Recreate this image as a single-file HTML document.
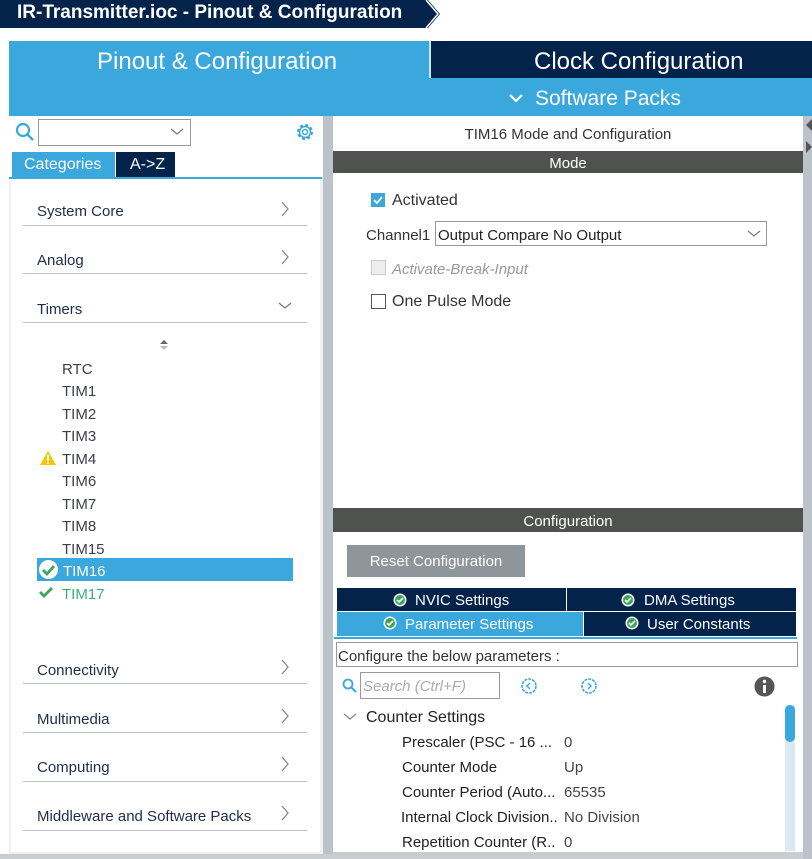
<!DOCTYPE html>
<html><head><meta charset="utf-8"><style>
*{margin:0;padding:0;box-sizing:border-box}
body{width:812px;height:859px;overflow:hidden;background:#fff;font-family:"Liberation Sans",Arial,sans-serif;position:relative;color:#333}
.a{position:absolute}
.t{position:absolute;white-space:nowrap}
.cat{position:absolute;left:23px;width:284px;height:1px;background:#b8c2cc}
.ct{position:absolute;left:37px;font-size:15px;color:#1f2d4a}
.ar{position:absolute;left:280px}
.li{position:absolute;left:62px;font-size:15px;color:#3a3f4a}
.pr{position:absolute;font-size:15px;color:#222}
</style></head><body>
<div class="a" style="left:0;top:0;width:428px;height:28px;background:#03234b"></div>
<svg class="a" style="left:418px;top:0" width="24" height="28"><path d="M0 0 L10 0 L22 14 L10 28 L0 28Z" fill="#03234b"/><path d="M8 0 L20 14 L8 28" stroke="#fff" stroke-width="1.5" fill="none"/></svg>
<div class="t" style="left:17px;top:2px;font-size:19px;font-weight:bold;color:#fff">IR-Transmitter.ioc - Pinout &amp; Configuration</div>
<div class="a" style="left:9px;top:41px;width:420px;height:37px;background:#3aa8dc"></div>
<div class="a" style="left:429px;top:41px;width:2px;height:37px;background:#cfe6f2"></div>
<div class="a" style="left:431px;top:41px;width:381px;height:37px;background:#03234b"></div>
<div class="t" style="left:97px;top:48px;font-size:24px;color:#fff">Pinout &amp; Configuration</div>
<div class="t" style="left:534px;top:48px;font-size:24px;color:#fff">Clock Configuration</div>
<div class="a" style="left:9px;top:78px;width:803px;height:38px;background:#3aa8dc"></div>
<svg class="a" style="left:509px;top:93px" width="14" height="10"><path d="M1 2 L7 8 L13 2" stroke="#fff" stroke-width="2.2" fill="none"/></svg>
<div class="t" style="left:535px;top:87px;font-size:21px;color:#fff">Software Packs</div>
<div class="a" style="left:9px;top:116px;width:314px;height:738px;background:#f0f0f0"></div>
<div class="a" style="left:11px;top:180px;width:309px;height:672px;background:#fff"></div>
<div class="a" style="left:9px;top:116px;width:314px;height:64px;background:#fff"></div>
<div class="a" style="left:323px;top:116px;width:10px;height:740px;background:#b9c3c9"></div>
<div class="a" style="left:0;top:854px;width:333px;height:5px;background:#c8cdd1"></div>
<svg class="a" style="left:15px;top:121px" width="22" height="22"><circle cx="8" cy="9" r="6" stroke="#3aa8dc" stroke-width="2.2" fill="none"/><path d="M12 13 L18 19" stroke="#3aa8dc" stroke-width="2.4"/></svg>
<div class="a" style="left:38px;top:119px;width:153px;height:27px;border:1px solid #999;background:#fff"></div>
<svg class="a" style="left:170px;top:128px" width="14" height="8"><path d="M1 1 L7 6 L13 1" stroke="#777" stroke-width="1.2" fill="none"/></svg>
<svg class="a" style="left:294px;top:121px" width="22" height="22"><circle cx="11" cy="11" r="7" stroke="#3aa8dc" stroke-width="2" fill="none" stroke-dasharray="3 2.5"/><circle cx="11" cy="11" r="5.5" stroke="#3aa8dc" stroke-width="1.5" fill="none"/><circle cx="11" cy="11" r="2.5" stroke="#3aa8dc" stroke-width="1.5" fill="none"/></svg>
<div class="a" style="left:12px;top:152px;width:103px;height:25px;background:#3aa8dc"></div>
<div class="t" style="left:24px;top:156px;font-size:16px;color:#fff">Categories</div>
<div class="a" style="left:116px;top:152px;width:59px;height:25px;background:#03234b"></div>
<div class="t" style="left:130px;top:156px;font-size:16px;color:#fff">A-&gt;Z</div>
<div class="a" style="left:9px;top:177px;width:313px;height:2px;background:#3aa8dc"></div>

<div class="ct" style="top:203px">System Core</div><svg class="ar" style="top:201px" width="10" height="16"><path d="M2 1 L8 8 L2 15" stroke="#888" stroke-width="1.3" fill="none"/></svg><div class="cat" style="top:225px"></div>
<div class="ct" style="top:252px">Analog</div><svg class="ar" style="top:249px" width="10" height="16"><path d="M2 1 L8 8 L2 15" stroke="#888" stroke-width="1.3" fill="none"/></svg><div class="cat" style="top:273px"></div>
<div class="ct" style="top:301px">Timers</div><svg class="a" style="left:278px;top:302px" width="14" height="8"><path d="M1 1 L7 6 L13 1" stroke="#777" stroke-width="1.2" fill="none"/></svg><div class="cat" style="top:322px"></div>
<svg class="a" style="left:159px;top:339px" width="10" height="12"><path d="M1 5 L5 1 L9 5Z" fill="#666"/><path d="M1 7 L5 11 L9 7Z" fill="#bbb"/></svg>
<div class="li" style="top:361px">RTC</div>
<div class="li" style="top:383px">TIM1</div>
<div class="li" style="top:406px">TIM2</div>
<div class="li" style="top:428px">TIM3</div>
<svg class="a" style="left:39px;top:450px" width="18" height="16"><path d="M9 1 L17 15 L1 15Z" fill="#f7c600"/><path d="M9 5 L9 11" stroke="#fff" stroke-width="2"/><circle cx="9" cy="13" r="1" fill="#fff"/></svg>
<div class="li" style="top:451px">TIM4</div>
<div class="li" style="top:473px">TIM6</div>
<div class="li" style="top:496px">TIM7</div>
<div class="li" style="top:518px">TIM8</div>
<div class="li" style="top:541px">TIM15</div>
<div class="a" style="left:37px;top:558px;width:256px;height:23px;background:#3aa8dc"></div>
<svg class="a" style="left:38px;top:559px" width="21" height="21"><circle cx="10.5" cy="10.5" r="9.5" fill="#fff"/><path d="M5 11 L9 15 L16 7" stroke="#3aa45c" stroke-width="2.8" fill="none"/></svg>
<div class="li" style="top:563px;left:63px;color:#fff">TIM16</div>
<svg class="a" style="left:38px;top:585px" width="16" height="14"><path d="M2 7 L6 11 L14 3" stroke="#3aa45c" stroke-width="2.8" fill="none"/></svg>
<div class="li" style="top:586px;color:#3bb07a">TIM17</div>

<div class="ct" style="top:662px">Connectivity</div><svg class="ar" style="top:659px" width="10" height="16"><path d="M2 1 L8 8 L2 15" stroke="#888" stroke-width="1.3" fill="none"/></svg><div class="cat" style="top:683px"></div>
<div class="ct" style="top:711px">Multimedia</div><svg class="ar" style="top:708px" width="10" height="16"><path d="M2 1 L8 8 L2 15" stroke="#888" stroke-width="1.3" fill="none"/></svg><div class="cat" style="top:732px"></div>
<div class="ct" style="top:759px">Computing</div><svg class="ar" style="top:756px" width="10" height="16"><path d="M2 1 L8 8 L2 15" stroke="#888" stroke-width="1.3" fill="none"/></svg><div class="cat" style="top:781px"></div>
<div class="ct" style="top:808px">Middleware and Software Packs</div><svg class="ar" style="top:805px" width="10" height="16"><path d="M2 1 L8 8 L2 15" stroke="#888" stroke-width="1.3" fill="none"/></svg><div class="cat" style="top:830px"></div>

<div class="a" style="left:803px;top:116px;width:9px;height:743px;background:#b9c3c9"></div>
<svg class="a" style="left:803px;top:118px" width="9" height="36"><path d="M9 1 L3 7 L9 13Z" fill="#555"/><path d="M3 23 L9 29 L3 35Z" fill="#555"/></svg>
<div class="t" style="left:333px;width:470px;text-align:center;top:126px;font-size:15px;color:#333">TIM16 Mode and Configuration</div>
<div class="a" style="left:333px;top:151px;width:470px;height:22px;background:#505250"></div>
<div class="t" style="left:333px;width:470px;text-align:center;top:155px;font-size:15px;color:#fff">Mode</div>
<div class="a" style="left:371px;top:193px;width:14px;height:14px;background:#3aa8dc"></div>
<svg class="a" style="left:371px;top:193px" width="14" height="14"><path d="M3 7 L6 10 L11 4" stroke="#fff" stroke-width="1.8" fill="none"/></svg>
<div class="t" style="left:392px;top:192px;font-size:16px;color:#333">Activated</div>
<div class="t" style="left:366px;top:227px;font-size:15px;color:#333">Channel1</div>
<div class="a" style="left:435px;top:221px;width:332px;height:25px;border:1px solid #999"></div>
<div class="t" style="left:438px;top:227px;font-size:15px;color:#222">Output Compare No Output</div>
<svg class="a" style="left:747px;top:230px" width="14" height="8"><path d="M1 1 L7 6 L13 1" stroke="#777" stroke-width="1.2" fill="none"/></svg>
<div class="a" style="left:371px;top:260px;width:15px;height:15px;border:1px solid #ccc;background:#eee"></div>
<div class="t" style="left:392px;top:261px;font-size:15px;font-style:italic;color:#999">Activate-Break-Input</div>
<div class="a" style="left:371px;top:294px;width:15px;height:15px;border:1px solid #555"></div>
<div class="t" style="left:392px;top:293px;font-size:16px;color:#333">One Pulse Mode</div>

<div class="a" style="left:333px;top:508px;width:470px;height:24px;background:#505250"></div>
<div class="t" style="left:333px;width:470px;text-align:center;top:513px;font-size:15px;color:#fff">Configuration</div>
<div class="a" style="left:347px;top:545px;width:178px;height:32px;background:#8e959b"></div>
<div class="t" style="left:347px;width:178px;text-align:center;top:553px;font-size:15px;color:#fff">Reset Configuration</div>
<div class="a" style="left:337px;top:588px;width:229px;height:23px;background:#03234b"></div>
<div class="a" style="left:567px;top:588px;width:229px;height:23px;background:#03234b"></div>
<div class="a" style="left:337px;top:612px;width:246px;height:24px;background:#3aa8dc"></div>
<div class="a" style="left:584px;top:612px;width:212px;height:24px;background:#03234b"></div>
<div class="a" style="left:334px;top:637px;width:463px;height:2px;background:#3aa8dc"></div>
<svg class="a" style="left:393px;top:593px" width="14" height="14"><circle cx="7" cy="7" r="6.5" fill="#fff"/><circle cx="7" cy="7" r="5" fill="#3aa45c"/><path d="M4 7 L6 9 L10 5" stroke="#fff" stroke-width="1.6" fill="none"/></svg>
<div class="t" style="left:415px;top:592px;font-size:15px;color:#fff">NVIC Settings</div>
<svg class="a" style="left:621px;top:593px" width="14" height="14"><circle cx="7" cy="7" r="6.5" fill="#fff"/><circle cx="7" cy="7" r="5" fill="#3aa45c"/><path d="M4 7 L6 9 L10 5" stroke="#fff" stroke-width="1.6" fill="none"/></svg>
<div class="t" style="left:644px;top:592px;font-size:15px;color:#fff">DMA Settings</div>
<svg class="a" style="left:383px;top:616px" width="14" height="14"><circle cx="7" cy="7" r="6.5" fill="#fff"/><circle cx="7" cy="7" r="5" fill="#3aa45c"/><path d="M4 7 L6 9 L10 5" stroke="#fff" stroke-width="1.6" fill="none"/></svg>
<div class="t" style="left:405px;top:616px;font-size:15px;color:#fff">Parameter Settings</div>
<svg class="a" style="left:625px;top:616px" width="14" height="14"><circle cx="7" cy="7" r="6.5" fill="#fff"/><circle cx="7" cy="7" r="5" fill="#3aa45c"/><path d="M4 7 L6 9 L10 5" stroke="#fff" stroke-width="1.6" fill="none"/></svg>
<div class="t" style="left:647px;top:616px;font-size:15px;color:#fff">User Constants</div>
<div class="a" style="left:336px;top:642px;width:462px;height:25px;border:1px solid #999"></div>
<div class="t" style="left:338px;top:648px;font-size:15px;color:#333">Configure the below parameters :</div>
<svg class="a" style="left:342px;top:678px" width="16" height="16"><circle cx="6" cy="6" r="4.5" stroke="#3aa8dc" stroke-width="1.8" fill="none"/><path d="M9 9 L14 14" stroke="#3aa8dc" stroke-width="2"/></svg>
<div class="a" style="left:360px;top:672px;width:140px;height:27px;border:1px solid #999"></div>
<div class="t" style="left:363px;top:678px;font-size:15px;font-style:italic;color:#aaa">Search (Ctrl+F)</div>
<svg class="a" style="left:520px;top:677px" width="18" height="18"><circle cx="9" cy="9" r="7" stroke="#3aa8dc" stroke-width="1.6" fill="none" stroke-dasharray="3 1"/><path d="M10 6 L7 9 L10 12" stroke="#3aa8dc" stroke-width="1.4" fill="none"/></svg>
<svg class="a" style="left:580px;top:677px" width="18" height="18"><circle cx="9" cy="9" r="7" stroke="#3aa8dc" stroke-width="1.6" fill="none" stroke-dasharray="3 1"/><path d="M8 6 L11 9 L8 12" stroke="#3aa8dc" stroke-width="1.4" fill="none"/></svg>
<svg class="a" style="left:754px;top:676px" width="21" height="21"><circle cx="10.5" cy="10.5" r="10" fill="#555"/><rect x="9" y="9" width="3" height="8" fill="#fff"/><circle cx="10.5" cy="5.5" r="1.7" fill="#fff"/></svg>
<svg class="a" style="left:343px;top:712px" width="14" height="10"><path d="M1 2 L7 7 L13 2" stroke="#888" stroke-width="1.3" fill="none"/></svg>
<div class="pr" style="left:366px;top:709px;font-size:16px">Counter Settings</div>
<div class="pr" style="left:402px;top:734px">Prescaler (PSC - 16 ...</div><div class="pr" style="left:564px;top:734px;color:#444">0</div>
<div class="pr" style="left:402px;top:759px">Counter Mode</div><div class="pr" style="left:564px;top:759px;color:#444">Up</div>
<div class="pr" style="left:402px;top:784px">Counter Period (Auto...</div><div class="pr" style="left:564px;top:784px;color:#444">65535</div>
<div class="pr" style="left:401px;top:809px">Internal Clock Division..</div><div class="pr" style="left:564px;top:809px;color:#444">No Division</div>
<div class="pr" style="left:402px;top:834px">Repetition Counter (R..</div><div class="pr" style="left:564px;top:834px;color:#444">0</div>
<div class="a" style="left:785px;top:705px;width:10px;height:146px;background:#dbe9f5"></div>
<div class="a" style="left:785px;top:705px;width:10px;height:37px;background:#3aa8dc;border-radius:5px"></div>
<div class="a" style="left:333px;top:852px;width:470px;height:7px;background:#c8cdd1"></div>
</body></html>
